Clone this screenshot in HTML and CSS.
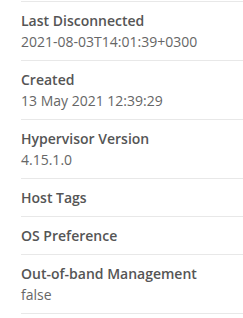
FILE: index.html
```html
<!DOCTYPE html>
<html lang="en">
<head>
    <meta charset="UTF-8">
    <meta name="viewport" content="width=device-width, initial-scale=1.0">
    <title>Host Details</title>
    <link rel="stylesheet" href="styles.css">
</head>
<body>
    <div class="details">
        <div class="detail-item">
            <div class="detail-title">Last Disconnected</div>
            <div class="detail-value">2021-08-03T14:01:39+0300</div>
        </div>
        <div class="detail-item">
            <div class="detail-title">Created</div>
            <div class="detail-value">13 May 2021 12:39:29</div>
        </div>
        <div class="detail-item">
            <div class="detail-title">Hypervisor Version</div>
            <div class="detail-value">4.15.1.0</div>
        </div>
        <div class="detail-item">
            <div class="detail-title">Host Tags</div>
        </div>
        <div class="detail-item">
            <div class="detail-title">OS Preference</div>
        </div>
        <div class="detail-item">
            <div class="detail-title">Out-of-band Management</div>
            <div class="detail-value">false</div>
        </div>
    </div>
</body>
</html>
```

FILE: styles.css
```css
body {
    font-family: "Open Sans", "Noto Sans", Arial, sans-serif;
    margin: 0;
    padding: 0;
    font-size: 14px;
    line-height: 21px;
    color: #666;
    background-color: #fff;
}
.details {
    padding: 1px 0 0 21px;
}
.detail-item {
    border-top: 1px solid #e8e8e8;
    padding: 8px 0;
}
.detail-item:last-child {
    border-bottom: 1px solid #e8e8e8;
}
.detail-title {
    font-weight: 600;
    color: #555;
}
.detail-value {
    color: #666;
}
```
